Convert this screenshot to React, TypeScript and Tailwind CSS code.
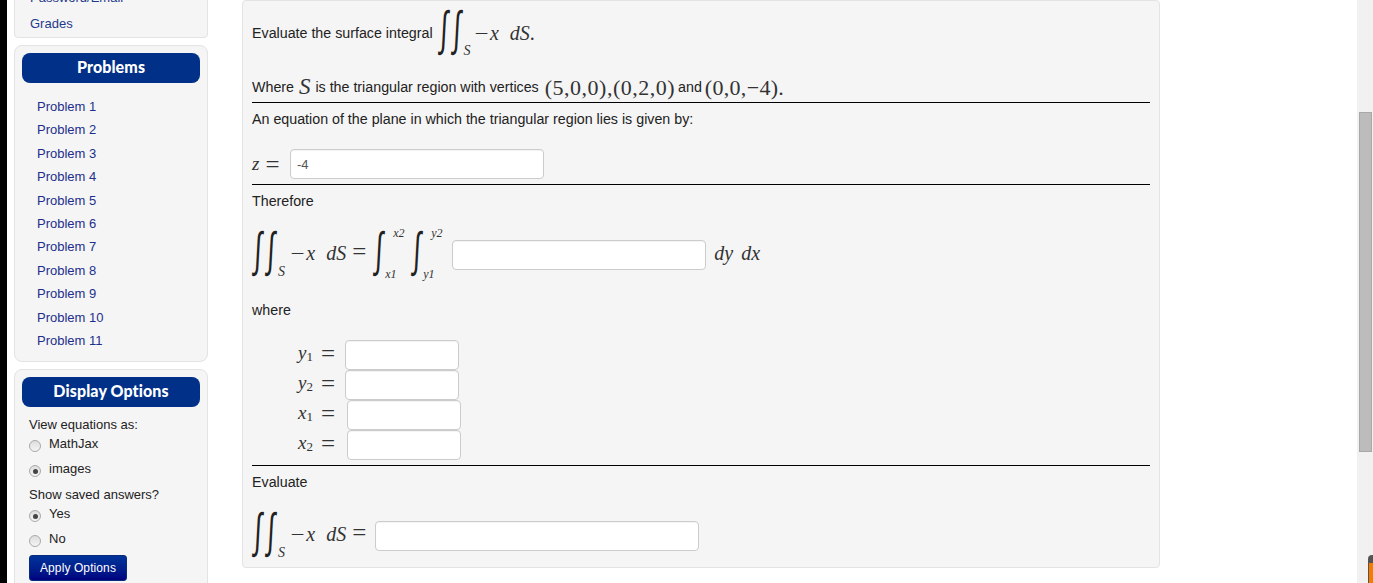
import React from "react";

const problems = Array.from({ length: 11 }, (_, i) => `Problem ${i + 1}`);

function M({ children, className = "" }: { children: React.ReactNode; className?: string }) {
  return <span className={`font-['Liberation_Serif',serif] text-[#333] ${className}`}>{children}</span>;
}
function V({ children }: { children: React.ReactNode }) {
  return <i className="font-['Liberation_Serif',serif] text-[#333]">{children}</i>;
}
function Eq() {
  return <span className="font-['Liberation_Serif',serif] text-[25px] leading-none text-[#333]">=</span>;
}
function Sign() {
  return (
    <span className="flex h-[56px] w-[13px] items-center justify-center">
      <span className="mb-[10px] inline-block -skew-x-6 scale-x-[0.85] scale-y-[1.6] font-['DejaVu_Sans',sans-serif] text-[30px] font-extralight leading-none text-[#222]">∫</span>
    </span>
  );
}
function Integral({ lower, upper, up, w }: { lower: string; upper: string; up: string; w: string }) {
  return (
    <span className={`inline-flex h-[56px] items-center ${w}`}>
      <Sign />
      <span className="mb-[3px] flex h-[55px] flex-col justify-between font-['Liberation_Serif',serif] text-[12px] italic leading-[14px] text-[#333]">
        <span className={up}>{upper}</span>
        <span>{lower}</span>
      </span>
    </span>
  );
}
function DoubleS() {
  return (
    <span className="inline-flex h-[56px] w-[34px] items-center">
      <Sign />
      <Sign />
      <span className="mt-[34px] font-['Liberation_Serif',serif] text-[14px] italic leading-[14px] text-[#333]">S</span>
    </span>
  );
}
function Expr({ eq }: { eq?: boolean }) {
  return (
    <M className="flex items-center whitespace-pre text-[20px]">
      <span className="mr-[2px] inline-block scale-x-125 px-[1px]">−</span>
      <V>x</V>
      <span className="w-[11px]" />
      <V>dS</V>
      {eq ? <span className="ml-[6px]"><Eq /></span> : <span>.</span>}
    </M>
  );
}
function Field({ className = "", value = "" }: { className?: string; value?: string }) {
  return (
    <input
      readOnly
      value={value}
      className={`h-[30px] rounded-[4px] border border-[#ccc] bg-white px-[6px] text-[13px] text-[#555] shadow-[inset_0_1px_1px_rgba(0,0,0,0.05)] outline-none ${className}`}
    />
  );
}
function Radio({ checked }: { checked?: boolean }) {
  return (
    <span className="flex h-[12px] w-[12px] items-center justify-center rounded-full border border-[#aaa] bg-gradient-to-b from-[#ddd] to-[#f5f5f5]">
      {checked && <span className="h-[5px] w-[5px] rounded-full bg-[#444]" />}
    </span>
  );
}
function Opt({ label, checked }: { label: string; checked?: boolean }) {
  return (
    <div className="flex h-[25px] items-start gap-[8px]">
      <span className="mt-[5px]"><Radio checked={checked} /></span>
      <span className="leading-[18px]">{label}</span>
    </div>
  );
}
function Hdr({ children }: { children: React.ReactNode }) {
  return (
    <div className="flex h-[30px] items-center justify-center rounded-[8px] bg-[#003087] pb-[2px] font-['Lato',sans-serif] text-[16px] font-black tracking-[0.1px] text-white">
      {children}
    </div>
  );
}

export default function App() {
  return (
    <div className="relative flex h-[583px] w-[1373px] overflow-hidden bg-white font-['Liberation_Sans',Arial,sans-serif] text-[14.25px] text-[#222]">
      <div className="w-[7px] shrink-0 bg-black" />
      <aside className="ml-[7px] w-[194px] shrink-0 text-[13px]">
        <div className="mt-[-20px] h-[58px] rounded-[4px] border border-[#e3e3e3] bg-[#f5f5f5] pl-[15px] pt-[5px] text-[#1f3a8a]">
          <div className="leading-[23px]">Password/Email</div>
          <div className="mt-[3px] leading-[23px]">Grades</div>
        </div>
        <div className="mt-[7px] h-[317px] rounded-[8px] border border-[#e3e3e3] bg-[#f5f5f5] p-[7px]">
          <Hdr>Problems</Hdr>
          <ul className="mt-[11px] pt-[1px] pl-[15px] text-[#1c2f8c]">
            {problems.map((p) => (
              <li key={p} className="h-[23.4px] leading-[23.4px]">{p}</li>
            ))}
          </ul>
        </div>
        <div className="mt-[7px] h-[240px] rounded-[8px] border border-[#e3e3e3] bg-[#f5f5f5] p-[7px]">
          <Hdr>Display Options</Hdr>
          <div className="pl-[7px] text-[#222]">
            <div className="mt-[9px] leading-[18px]">View equations as:</div>
            <div className="mt-[1px]"><Opt label="MathJax" /></div>
            <Opt label="images" checked />
            <div className="mt-[1px] leading-[18px]">Show saved answers?</div>
            <div className="mt-[1px]"><Opt label="Yes" checked /></div>
            <Opt label="No" />
            <button className="flex h-[26px] w-[98px] items-center justify-center rounded-[3px] border border-[#0a2a7a] bg-gradient-to-b from-[#003399] to-[#000080] text-[12px] tracking-[0.1px] text-white">
              Apply Options
            </button>
          </div>
        </div>
      </aside>

      <main className="ml-[34px] h-[568px] w-[918px] shrink-0 rounded-[4px] border border-[#e3e3e3] bg-[#f5f5f5] px-[9px] text-[#222]">
        <div className="flex h-[59px] items-center pt-[7px]">
          <span className="mr-[5px]">Evaluate the surface integral</span>
          <DoubleS />
          <span className="mb-[2px] ml-[3px]"><Expr /></span>
        </div>
        <div className="flex h-[42px] items-center whitespace-pre pt-[13px]">
          <span>Where </span>
          <M className="ml-[1px] mr-[1px] text-[23px]"><V>S</V></M>
          <span> is the triangular region with vertices</span>
          <M className="ml-[6px] text-[22px] tracking-[0.5px]">(5,0,0),(0,2,0)</M>
          <span className="mx-[3px]">and</span>
          <M className="text-[22px] tracking-[0.3px]">(0,0,−4).</M>
        </div>
        <hr className="border-t border-black" />
        <div className="flex h-[33px] items-center">An equation of the plane in which the triangular region lies is given by:</div>
        <div className="mt-[13px] flex h-[30px] items-center">
          <M className="flex w-[38px] items-center gap-[6px] text-[19px]"><V>z</V><Eq /></M>
          <Field className="w-[254px]" value="-4" />
        </div>
        <hr className="mt-[5px] border-t border-black" />
        <div className="flex h-[33px] items-center">Therefore</div>
        <div className="mt-[9px] flex h-[56px] items-center">
          <DoubleS />
          <span className="mb-[4px] ml-[5px]"><Expr eq /></span>
          <span className="ml-[6px]"><Integral upper="x2" lower="x1" up="ml-[8px]" w="w-[38px]" /></span>
          <Integral upper="y2" lower="y1" up="ml-[8px]" w="w-[42px]" />
          <Field className="w-[254px]" />
          <M className="mb-[4px] ml-[8px] flex gap-[8px] text-[20px]"><V>dy</V><V>dx</V></M>
        </div>
        <div className="mt-[18px] flex h-[20px] items-center">where</div>
        <div className="mt-[19px] pl-[46px]">
          {([["y", "1", "w-[47px]"], ["y", "2", "w-[47px]"], ["x", "1", "w-[49px]"], ["x", "2", "w-[49px]"]] as const).map(([v, n, w]) => (
            <div key={v + n} className="flex h-[30px] items-center">
              <M className={`${w} mb-[4px] flex items-center text-[19px]`}>
                <V>{v}</V>
                <span className="mr-[8px] mt-[6px] text-[13px] leading-none">{n}</span>
                <Eq />
              </M>
              <Field className="w-[114px]" />
            </div>
          ))}
        </div>
        <hr className="mt-[5px] border-t border-black" />
        <div className="flex h-[33px] items-center">Evaluate</div>
        <div className="mt-[9px] flex h-[56px] items-center">
          <DoubleS />
          <span className="mb-[4px] ml-[5px]"><Expr eq /></span>
          <Field className="ml-[9px] w-[324px]" />
        </div>
      </main>

      <div className="absolute right-0 top-0 h-[583px] w-[16px] bg-[#f1f1f1]">
        <div className="absolute left-[2px] top-[112px] h-[340px] w-[13px] border border-[#a8a8a8] bg-[#bcbcbc]" />
        <div className="absolute left-[11px] top-[555px] h-[28px] w-[5px] rounded-tl-[4px] bg-[#555]">
          <div className="ml-[1px] mt-[8px] h-[20px] w-[4px] bg-[#f57c00]" />
        </div>
      </div>
    </div>
  );
}
